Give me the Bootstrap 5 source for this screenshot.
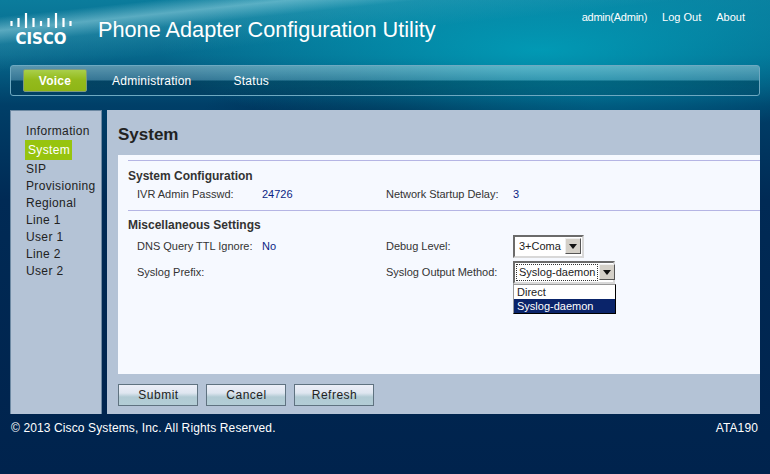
<!DOCTYPE html>
<html lang="en"><head><meta charset="utf-8"><title>Phone Adapter Configuration Utility</title>
<link href="https://cdn.jsdelivr.net/npm/bootstrap@5.3.0/dist/css/bootstrap.min.css" rel="stylesheet">
<style>
html,body{height:100%;margin:0}
body{width:770px;height:474px;overflow:hidden;font-family:"Liberation Sans",Arial,sans-serif;font-size:11px;color:#333;
background:
 linear-gradient(174deg,transparent 3%,rgba(170,225,235,.5) 5.5%,rgba(120,200,215,.16) 8%,transparent 13%),
 radial-gradient(ellipse 380px 90px at 540px 50px,rgba(0,165,190,.8),transparent 100%),
 radial-gradient(ellipse 200px 60px at 400px 118px,rgba(0,25,60,.6),transparent 100%),
 linear-gradient(180deg,#0b7c9c 0,#06688c 55px,#003f68 105px,#002a55 200px,#00234d 100%);}
.hdr{height:65px;padding:0 25px 0 10px}
.logo{width:62px;margin-top:13px;color:#fff}
.logo-bars{display:block;width:62px;height:15px}
.logo-word{font-family:"DejaVu Sans",sans-serif;font-size:15px;font-weight:700;line-height:13px;text-align:center;margin-top:5px;white-space:nowrap}
.app-title{font-size:21.7px;color:#fff;margin:17px 0 0 26px;line-height:26px}
.top-links{gap:15px;color:#fff;font-size:11px;padding-top:10px;line-height:14px}
.user-link{letter-spacing:-.25px}
.mainbar{margin:0 10px;height:31px;border:1px solid #6ea9c1;border-radius:3px;padding:4px 12px;
 background:linear-gradient(180deg,rgba(255,255,255,.34) 0,rgba(255,255,255,.2) 14px,rgba(0,0,0,.18) 15px,rgba(0,0,0,.1) 100%)}
.tab-item{color:#fff;font-size:12px;line-height:22px;letter-spacing:.25px}
.tab-on{width:64px;height:23px;margin-top:-1px;text-align:center;font-weight:700;border:1px solid #7d9a80;border-radius:2px;background:linear-gradient(180deg,#a9cf4a 0,#94bb1d 45%,#8fb516 100%)}
.tab-admin{margin-left:25px}.tab-status{margin-left:42px}
.body-row{margin:14px 10px 0;height:304px;gap:5px}
.side{width:92px;background:#b4c3d6;border:1px solid #6d89a3;border-bottom:0;padding:12px 0 0 15px;font-size:12px;letter-spacing:.35px;color:#222}
.side div{line-height:17px}
.side .on{background:#97c40e;color:#fff;width:47px;height:20px;line-height:20px;padding-left:3px;margin:0 0 1px -1px}
.panel{width:653px;background:#b4c3d6;padding:0 0 0 11px}
.panel h1{font-size:17px;font-weight:700;color:#222;margin:0;line-height:49px;height:45px}
.sheet{height:219px;background:#f6f9ff;padding:5px 0 0 10px}
.rule{border-top:1px solid #b5b5e4;height:0}
.sec{font-size:12px;font-weight:700;color:#333;line-height:14px;margin-top:8px}
.sec-b{margin-top:7px}
.frow{display:flex;line-height:14px;white-space:nowrap}
.l1{width:134px;padding-left:9px;flex:none}.v1{width:124px;color:#0b1f84;flex:none}
.l2{width:127px;flex:none;letter-spacing:-.03px}.v2{color:#0b1f84}
.rule-b{margin-top:9px}.row-a{margin-top:1px;height:26px}.row-b{height:26px}
.cfg{height:23px;background:#fff;border:2px solid;border-color:#6b6b6b #d8d8d8 #d8d8d8 #6b6b6b;display:inline-flex;align-items:center;padding:0 1px 0 4px;font-size:11px;color:#222;position:relative;flex:none}
.cfg-s{width:71px}.cfg-l{width:102px;padding-left:1px}
.cfg-arrow{width:16px;height:16px;background:#d4d0c8;border:1px solid;border-color:#eee #555 #555 #eee;margin-left:auto;display:flex;align-items:center;justify-content:center;flex:none}
.cfg-arrow::after{content:"";border:4px solid transparent;border-top:5px solid #111;border-bottom:0}
.cfg-focus{outline:1px dotted #333;outline-offset:-1px;padding:0 3px;height:17px;line-height:17px;margin-right:1px;flex:none}
.dd{position:absolute;left:-2px;top:21px;width:103px;background:#fff;border:1px solid #000;border-left-color:#999;border-top-color:#999;z-index:3}
.dd div{line-height:14px;padding-left:3px;height:14px}
.dd .hit{background:#0a246a;color:#fff}
.acts{gap:8px;margin-top:10px}
.act{width:80px;height:22px;border:1px solid #5f7280;border-radius:0;padding:0 0 0 1px;font-size:12px;line-height:20px;color:#222;letter-spacing:.5px;background:linear-gradient(180deg,#eceff8 0,#dfe6f0 40%,#b1cad3 60%,#b3cdd6 100%)}
.foot{padding:7px 12px 0 11px;color:#fff;font-size:12px;line-height:14px;letter-spacing:.12px}
</style></head><body>
<header class="hdr d-flex">
 <div class="logo">
  <svg class="logo-bars" viewBox="0 0 62 15"><g stroke="#fff" stroke-width="2.2"><path d="M1.500 8v5M8.500 5v9M16 0v15M23.500 5v9M31 8v5M38.500 5v9M46 0v15M53.500 5v9M60.500 8v5"/></g></svg>
  <div class="logo-word">CISCO</div>
 </div>
 <div class="app-title">Phone Adapter Configuration Utility</div>
 <div class="top-links d-flex ms-auto"><span class="user-link">admin(Admin)</span><span>Log Out</span><span>About</span></div>
</header>
<nav class="mainbar d-flex">
 <div class="tab-item tab-on">Voice</div><div class="tab-item tab-admin">Administration</div><div class="tab-item tab-status">Status</div>
</nav>
<div class="body-row d-flex">
 <aside class="side">
  <div>Information</div><div class="on">System</div><div>SIP</div><div>Provisioning</div><div>Regional</div><div>Line 1</div><div>User 1</div><div>Line 2</div><div>User 2</div>
 </aside>
 <main class="panel">
  <h1>System</h1>
  <div class="sheet">
   <div class="rule"></div>
   <div class="sec">System Configuration</div>
   <div class="frow mt-1"><div class="l1">IVR Admin Passwd:</div><div class="v1">24726</div><div class="l2">Network Startup Delay:</div><div class="v2">3</div></div>
   <div class="rule rule-b"></div>
   <div class="sec sec-b">Miscellaneous Settings</div>
   <div class="frow align-items-center row-a"><div class="l1">DNS Query TTL Ignore:</div><div class="v1">No</div><div class="l2">Debug Level:</div><div class="cfg cfg-s">3+Coma<span class="cfg-arrow"></span></div></div>
   <div class="frow align-items-center row-b"><div class="l1">Syslog Prefix:</div><div class="v1"></div><div class="l2">Syslog Output Method:</div><div class="cfg cfg-l"><span class="cfg-focus">Syslog-daemon</span><span class="cfg-arrow"></span><div class="dd"><div>Direct</div><div class="hit">Syslog-daemon</div></div></div></div>
  </div>
  <div class="acts d-flex"><button class="btn act">Submit</button><button class="btn act">Cancel</button><button class="btn act">Refresh</button></div>
 </main>
</div>
<footer class="foot d-flex justify-content-between"><span>© 2013 Cisco Systems, Inc. All Rights Reserved.</span><span>ATA190</span></footer>
</body></html>
